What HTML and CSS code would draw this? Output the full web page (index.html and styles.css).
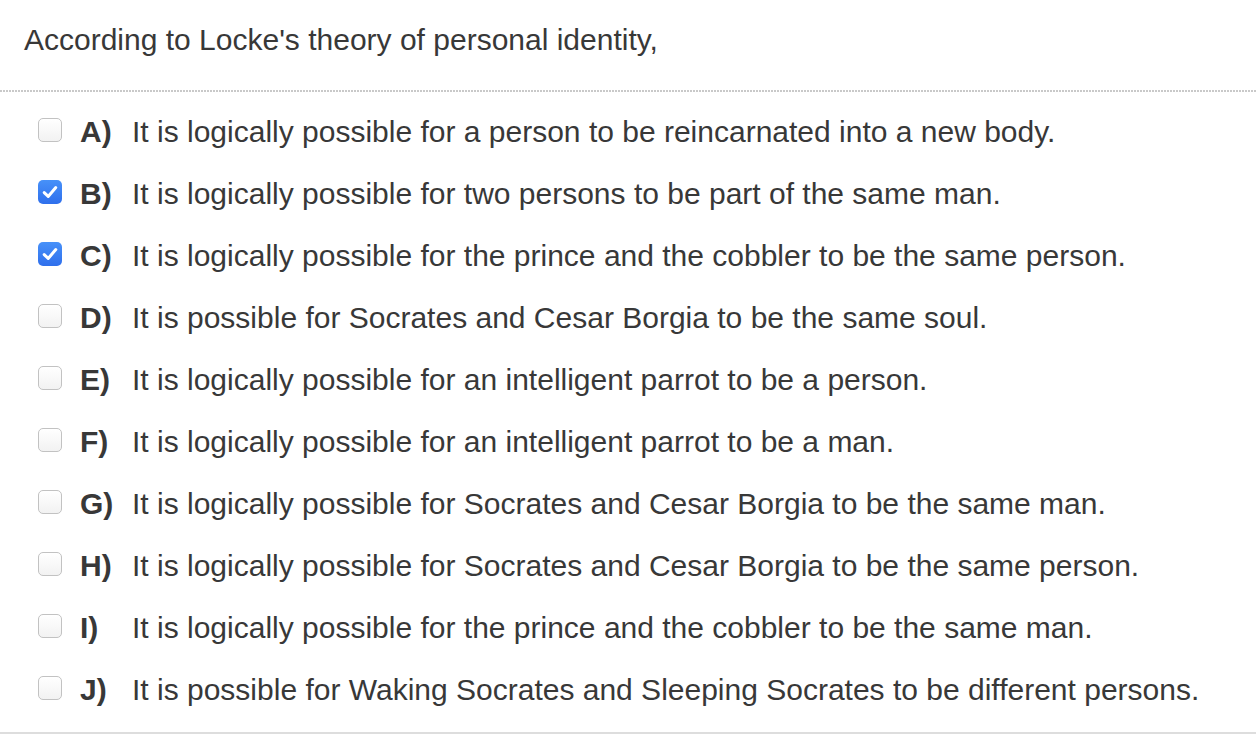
FILE: index.html
```html
<!DOCTYPE html>
<html>
<head>
<meta charset="utf-8">
<link rel="stylesheet" href="styles.css">
</head>
<body>
<div class="question">
  <div class="prompt">According to Locke's theory of personal identity,</div>
  <div class="divider"></div>
  <ul class="options">
    <li class="option"><span class="box"></span><span class="letter">A)</span><span class="text">It is logically possible for a person to be reincarnated into a new body.</span></li>
    <li class="option"><span class="box checked"><svg viewBox="0 0 24 24" width="24" height="24"><path d="M6.2 12.6 L10.2 16.4 L17.8 7.6" fill="none" stroke="#fff" stroke-width="3" stroke-linecap="round" stroke-linejoin="round"/></svg></span><span class="letter">B)</span><span class="text">It is logically possible for two persons to be part of the same man.</span></li>
    <li class="option"><span class="box checked"><svg viewBox="0 0 24 24" width="24" height="24"><path d="M6.2 12.6 L10.2 16.4 L17.8 7.6" fill="none" stroke="#fff" stroke-width="3" stroke-linecap="round" stroke-linejoin="round"/></svg></span><span class="letter">C)</span><span class="text">It is logically possible for the prince and the cobbler to be the same person.</span></li>
    <li class="option"><span class="box"></span><span class="letter">D)</span><span class="text">It is possible for Socrates and Cesar Borgia to be the same soul.</span></li>
    <li class="option"><span class="box"></span><span class="letter">E)</span><span class="text">It is logically possible for an intelligent parrot to be a person.</span></li>
    <li class="option"><span class="box"></span><span class="letter">F)</span><span class="text">It is logically possible for an intelligent parrot to be a man.</span></li>
    <li class="option"><span class="box"></span><span class="letter">G)</span><span class="text">It is logically possible for Socrates and Cesar Borgia to be the same man.</span></li>
    <li class="option"><span class="box"></span><span class="letter">H)</span><span class="text">It is logically possible for Socrates and Cesar Borgia to be the same person.</span></li>
    <li class="option"><span class="box"></span><span class="letter">I)</span><span class="text">It is logically possible for the prince and the cobbler to be the same man.</span></li>
    <li class="option"><span class="box"></span><span class="letter">J)</span><span class="text">It is possible for Waking Socrates and Sleeping Socrates to be different persons.</span></li>
  </ul>
</div>
</body>
</html>
```
FILE: styles.css
```css
html, body {
  margin: 0;
  padding: 0;
  background: #fff;
}
body {
  font-family: "Liberation Sans", Arial, Helvetica, sans-serif;
  color: #383838;
  width: 1256px;
  height: 742px;
  overflow: hidden;
}
.question {
  border-bottom: 2px solid #dddddd;
  padding-bottom: 11px;
}
.prompt {
  font-size: 30px;
  line-height: 36px;
  padding: 22px 0 32px 24px;
}
.divider {
  height: 2px;
  background: repeating-linear-gradient(to right, #c9c9c9 0 2px, transparent 2px 3px);
}
.options {
  list-style: none;
  margin: 0;
  padding: 9px 0 0 0;
}
.option {
  display: flex;
  align-items: center;
  height: 62px;
  font-size: 30px;
  line-height: 62px;
}
.box {
  flex: 0 0 24px;
  box-sizing: border-box;
  width: 24px;
  height: 24px;
  margin: 0 18px 4px 38px;
  border: 1px solid #c2c2c2;
  border-radius: 5px;
  background: linear-gradient(#ffffff, #f2f2f2);
  display: flex;
}
.box.checked {
  border: none;
  background: linear-gradient(#4791f9, #2f6fec);
}
.box svg {
  display: block;
}
.letter {
  flex: 0 0 52px;
  font-weight: bold;
}
.text {
  white-space: nowrap;
}
```
